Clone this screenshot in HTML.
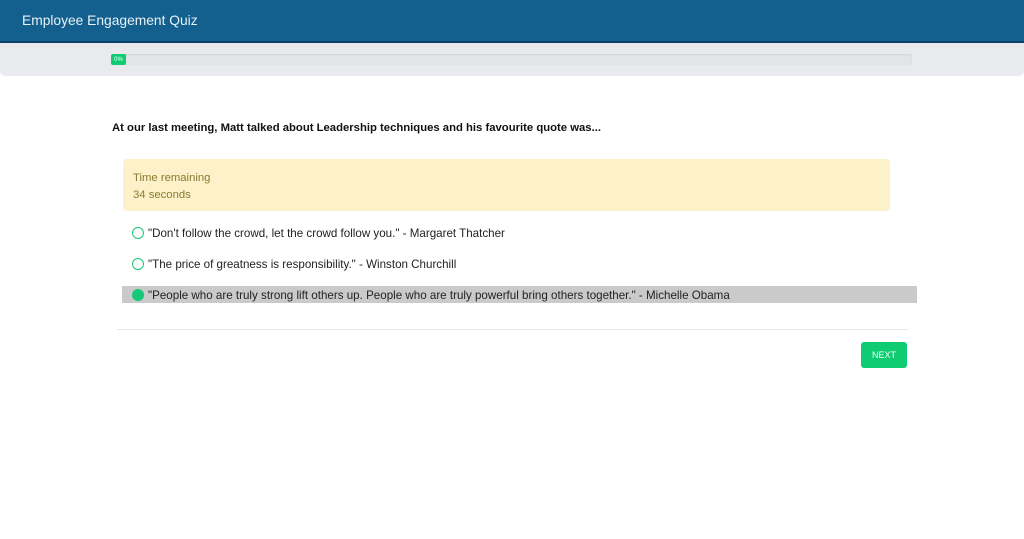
<!DOCTYPE html>
<html><head><style>
body{margin:0;width:1024px;height:539px;background:#fff;font-family:"Liberation Sans",sans-serif;position:relative;overflow:hidden}
.hdr{position:absolute;left:0;top:0;width:1024px;height:41px;background:#13608e;border-bottom:2px solid #0c3f6b}
.hdr span{position:absolute;left:22px;top:13px;color:#e8f1f6;font-size:13.8px}
.bar{position:absolute;left:0;top:43px;width:1024px;height:33px;background:#e8eaed;border-radius:0 0 5px 5px}
.track{position:absolute;left:111px;top:54px;width:801px;height:11px;background:#e2e4e6;border-radius:3px;box-shadow:inset 0 1px 1px #d2d4d6}
.fill{position:absolute;left:111px;top:54px;width:15px;height:11px;background:#0fcb72;border-radius:2px;color:#fff;font-size:6px;line-height:13px;text-align:center}
.q{position:absolute;left:112px;top:122px;font-size:11.3px;font-weight:bold;color:#111}
.timer{position:absolute;left:123px;top:159px;width:767px;height:52px;background:#fdf1c9;border-radius:4px;color:#8a7a30;font-size:11.3px}
.timer div{position:absolute;left:10px}
.opt{position:absolute;left:122px;height:17px;font-size:11.6px;color:#222;line-height:17px}
.opt i{position:absolute;left:10px;top:3px;width:10px;height:10px;border:1.5px solid #16c978;border-radius:50%}
.opt span{position:absolute;left:26px;top:1px;white-space:nowrap}
.hr{position:absolute;left:117px;top:329px;width:791px;height:1px;background:#e6e6e6}
.btn{position:absolute;left:861px;top:342px;width:46px;height:26px;background:#0fcb72;border-radius:3px;color:#fff;font-size:9px;line-height:26px;text-align:center}
</style></head><body>
<div class="hdr"><span>Employee Engagement Quiz</span></div>
<div class="bar"></div>
<div class="track"></div>
<div class="fill">0%</div>
<div class="q">At our last meeting, Matt talked about Leadership techniques and his favourite quote was...</div>
<div class="timer"><div style="top:13px">Time remaining</div><div style="top:30px">34 seconds</div></div>
<div class="opt" style="top:224px;width:500px"><i></i><span>"Don't follow the crowd, let the crowd follow you." - Margaret Thatcher</span></div>
<div class="opt" style="top:255px;width:500px"><i></i><span>"The price of greatness is responsibility." - Winston Churchill</span></div>
<div class="opt" style="top:286px;width:795px;background:#cacaca"><i style="background:#16c978"></i><span>"People who are truly strong lift others up. People who are truly powerful bring others together." - Michelle Obama</span></div>
<div class="hr"></div>
<div class="btn">NEXT</div>
</body></html>
